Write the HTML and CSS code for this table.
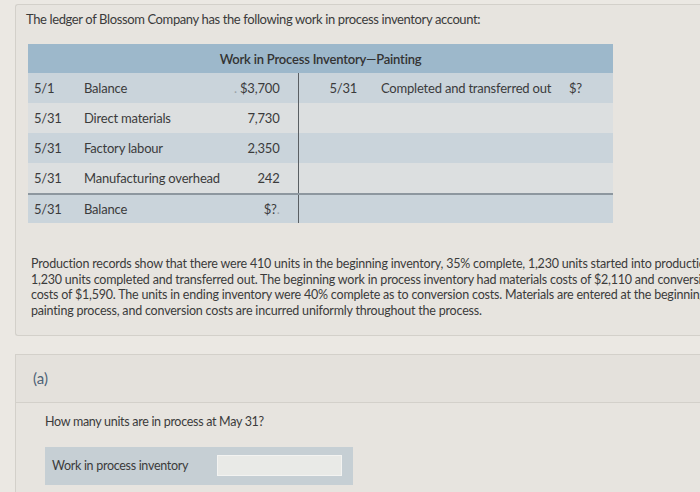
FILE: index.html
```html
<!DOCTYPE html>
<html>
<head>
<meta charset="utf-8">
<link rel="stylesheet" href="styles.css">
</head>
<body>
<div class="page">
  <section class="panel intro">
    <p class="title">The ledger of Blossom Company has the following work in process inventory account:</p>
    <table class="ledger">
      <colgroup>
        <col class="c-date"><col class="c-desc"><col class="c-amt"><col class="c-date2"><col class="c-desc2"><col class="c-amt2">
      </colgroup>
      <thead>
        <tr><th colspan="6">Work in Process Inventory—Painting</th></tr>
      </thead>
      <tbody>
        <tr class="dark">
          <td class="date">5/1</td><td>Balance</td><td class="amt"><span class="speck">.</span> $3,700</td>
          <td class="date2">5/31</td><td>Completed and transferred out</td><td class="amt2">$?</td>
        </tr>
        <tr class="light">
          <td class="date">5/31</td><td>Direct materials</td><td class="amt">7,730</td>
          <td class="date2"></td><td></td><td></td>
        </tr>
        <tr class="dark">
          <td class="date">5/31</td><td>Factory labour</td><td class="amt">2,350</td>
          <td class="date2"></td><td></td><td></td>
        </tr>
        <tr class="light">
          <td class="date">5/31</td><td>Manufacturing overhead</td><td class="amt">242</td>
          <td class="date2"></td><td></td><td></td>
        </tr>
        <tr class="dark total">
          <td class="date">5/31</td><td>Balance</td><td class="amt">$?<span class="speck">.</span></td>
          <td class="date2"></td><td></td><td></td>
        </tr>
      </tbody>
    </table>
    <p class="para">
      <span class="line">Production records show that there were 410 units in the beginning inventory, 35% complete, 1,230 units started into production, and</span>
      <span class="line">1,230 units completed and transferred out. The beginning work in process inventory had materials costs of $2,110 and conversion</span>
      <span class="line">costs of $1,590. The units in ending inventory were 40% complete as to conversion costs. Materials are entered at the beginning of the</span>
      <span class="line">painting process, and conversion costs are incurred uniformly throughout the process.</span>
    </p>
  </section>

  <section class="panel part-head">
    <span class="part-label">(a)</span>
  </section>

  <section class="panel part-body">
    <p class="question">How many units are in process at May 31?</p>
    <div class="answer">
      <span class="answer-label">Work in process inventory</span>
      <span class="answer-input"></span>
    </div>
  </section>
</div>
</body>
</html>
```

FILE: styles.css
```css
html, body {
  margin: 0;
  padding: 0;
}
body {
  width: 700px;
  height: 492px;
  overflow: hidden;
  background: #ebe8e3;
  font-family: Lato, "Open Sans", sans-serif;
  color: #3b3b3b;
}
.page {
  width: 760px;
  padding: 4px 0 0 15px;
  display: flex;
  flex-direction: column;
}
.panel {
  border: 1px solid #d3d0ca;
  border-right: none;
  border-radius: 3px 0 0 3px;
  background: #e7e4df;
}
.intro {
  padding: 6px 0 16px 0;
}
.title {
  margin: 0 0 0 10px;
  font-size: 13px;
  line-height: 17px;
  letter-spacing: -0.38px;
}
.ledger {
  margin: 16px 0 0 12px;
  width: 585px;
  table-layout: fixed;
  border-collapse: collapse;
  font-size: 13px;
  letter-spacing: -0.2px;
}
.c-date { width: 56px; }
.c-desc { width: 136px; }
.c-amt { width: 78px; }
.c-date2 { width: 83px; }
.c-desc2 { width: 184px; }
.c-amt2 { width: 48px; }
.ledger th {
  height: 29px;
  padding: 0;
  background: #9db8cb;
  font-weight: 600;
  font-size: 13px;
  color: #333;
  text-align: center;
}
.ledger td {
  height: 30px;
  padding: 0;
  white-space: nowrap;
}
.ledger tr.dark td { background: #cad4db; }
.ledger tr.light td { background: #dcdfe0; }
.ledger tr.total td {
  height: 28px;
  border-top: 2px solid #8d979f;
}
.ledger td.date { padding-left: 6px; }
.ledger td.amt {
  text-align: right;
  padding-right: 18px;
  border-right: 1px solid #5a5f63;
}
.ledger td.date2 { padding-left: 31px; }
.ledger td.amt2 { padding-left: 4px; }
.speck { color: #9aa2a8; }
.para {
  margin: 33px 0 0 15px;
  font-size: 12.5px;
  line-height: 15.7px;
  letter-spacing: -0.2px;
}
.line {
  display: block;
  white-space: nowrap;
}
.part-head {
  margin-top: 18px;
  height: 47px;
  background: #e4e1dc;
  display: flex;
  align-items: center;
  padding-left: 17px;
  border-radius: 0;
}
.part-label {
  font-size: 15px;
  color: #4e6276;
}
.part-body {
  border-top: none;
  border-radius: 0;
  padding: 11px 0 20px 29px;
}
.question {
  margin: 0;
  font-size: 12.5px;
  line-height: 16px;
  letter-spacing: -0.3px;
}
.answer {
  margin-top: 17px;
  width: 308px;
  height: 38px;
  background: #c6cfd4;
  display: flex;
  align-items: center;
  padding-left: 7px;
  box-sizing: border-box;
}
.answer-label {
  width: 165px;
  font-size: 12.5px;
  letter-spacing: -0.3px;
}
.answer-input {
  width: 125px;
  height: 21px;
  background: #e9eae7;
  border: 1px solid #f3f3f1;
  box-sizing: border-box;
}
```
